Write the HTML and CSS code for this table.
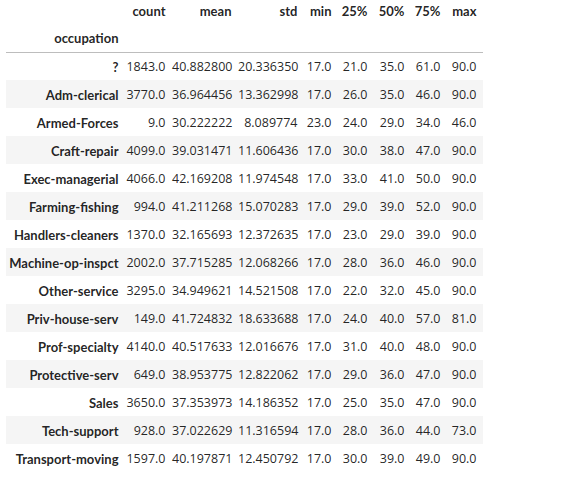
FILE: index.html
```html
<!DOCTYPE html>
<html>
<head>
<meta charset="utf-8">
<link rel="stylesheet" href="styles.css">
</head>
<body>
<table class="df">
  <colgroup>
    <col class="c-idx"><col class="c-count"><col class="c-mean"><col class="c-std"><col class="c-min"><col class="c-q1"><col class="c-q2"><col class="c-q3"><col class="c-max">
  </colgroup>
  <thead>
    <tr class="hdr">
      <th></th><th>count</th><th>mean</th><th>std</th><th>min</th><th>25%</th><th>50%</th><th>75%</th><th>max</th>
    </tr>
    <tr class="hdr-name">
      <th>occupation</th><th></th><th></th><th></th><th></th><th></th><th></th><th></th><th></th>
    </tr>
  </thead>
  <tbody>
    <tr><th>?</th><td>1843.0</td><td>40.882800</td><td>20.336350</td><td>17.0</td><td>21.0</td><td>35.0</td><td>61.0</td><td>90.0</td></tr>
    <tr><th>Adm-clerical</th><td>3770.0</td><td>36.964456</td><td>13.362998</td><td>17.0</td><td>26.0</td><td>35.0</td><td>46.0</td><td>90.0</td></tr>
    <tr><th>Armed-Forces</th><td>9.0</td><td>30.222222</td><td>8.089774</td><td>23.0</td><td>24.0</td><td>29.0</td><td>34.0</td><td>46.0</td></tr>
    <tr><th>Craft-repair</th><td>4099.0</td><td>39.031471</td><td>11.606436</td><td>17.0</td><td>30.0</td><td>38.0</td><td>47.0</td><td>90.0</td></tr>
    <tr><th>Exec-managerial</th><td>4066.0</td><td>42.169208</td><td>11.974548</td><td>17.0</td><td>33.0</td><td>41.0</td><td>50.0</td><td>90.0</td></tr>
    <tr><th>Farming-fishing</th><td>994.0</td><td>41.211268</td><td>15.070283</td><td>17.0</td><td>29.0</td><td>39.0</td><td>52.0</td><td>90.0</td></tr>
    <tr><th>Handlers-cleaners</th><td>1370.0</td><td>32.165693</td><td>12.372635</td><td>17.0</td><td>23.0</td><td>29.0</td><td>39.0</td><td>90.0</td></tr>
    <tr><th>Machine-op-inspct</th><td>2002.0</td><td>37.715285</td><td>12.068266</td><td>17.0</td><td>28.0</td><td>36.0</td><td>46.0</td><td>90.0</td></tr>
    <tr><th>Other-service</th><td>3295.0</td><td>34.949621</td><td>14.521508</td><td>17.0</td><td>22.0</td><td>32.0</td><td>45.0</td><td>90.0</td></tr>
    <tr><th>Priv-house-serv</th><td>149.0</td><td>41.724832</td><td>18.633688</td><td>17.0</td><td>24.0</td><td>40.0</td><td>57.0</td><td>81.0</td></tr>
    <tr><th>Prof-specialty</th><td>4140.0</td><td>40.517633</td><td>12.016676</td><td>17.0</td><td>31.0</td><td>40.0</td><td>48.0</td><td>90.0</td></tr>
    <tr><th>Protective-serv</th><td>649.0</td><td>38.953775</td><td>12.822062</td><td>17.0</td><td>29.0</td><td>36.0</td><td>47.0</td><td>90.0</td></tr>
    <tr><th>Sales</th><td>3650.0</td><td>37.353973</td><td>14.186352</td><td>17.0</td><td>25.0</td><td>35.0</td><td>47.0</td><td>90.0</td></tr>
    <tr><th>Tech-support</th><td>928.0</td><td>37.022629</td><td>11.316594</td><td>17.0</td><td>28.0</td><td>36.0</td><td>44.0</td><td>73.0</td></tr>
    <tr><th>Transport-moving</th><td>1597.0</td><td>40.197871</td><td>12.450792</td><td>17.0</td><td>30.0</td><td>39.0</td><td>49.0</td><td>90.0</td></tr>
  </tbody>
</table>
</body>
</html>
```

FILE: styles.css
```css
html, body {
  margin: 0;
  padding: 0;
  background: #ffffff;
}

.df {
  margin: -3px 0 0 6px;
  border-collapse: collapse;
  border-spacing: 0;
  table-layout: fixed;
  width: 477px;
  font-family: "Open Sans", "Noto Sans", sans-serif;
  font-size: 12.5px;
  color: rgba(0, 0, 0, 0.87);
}

.c-idx { width: 119px; }
.c-count { width: 47px; }
.c-mean { width: 66px; }
.c-std { width: 66px; }
.c-min { width: 34px; }
.c-q1 { width: 36px; }
.c-q2 { width: 37px; }
.c-q3 { width: 36px; }
.c-max { width: 36px; }

.df th,
.df td {
  height: 28px;
  padding: 2px 6.5px 0 0;
  line-height: 16px;
  text-align: right;
  vertical-align: middle;
  white-space: nowrap;
  box-sizing: border-box;
}

.df th {
  font-family: "Lato", "Open Sans", sans-serif;
  font-size: 13px;
  font-weight: bold;
}

.df thead th {
  padding-top: 0;
}

.df td {
  font-weight: normal;
}

.df .hdr-name th {
  height: 27px;
}

.df thead {
  border-bottom: 1px solid #bdbdbd;
}

.df tbody tr:nth-child(even) {
  background: #f5f5f5;
}
```
